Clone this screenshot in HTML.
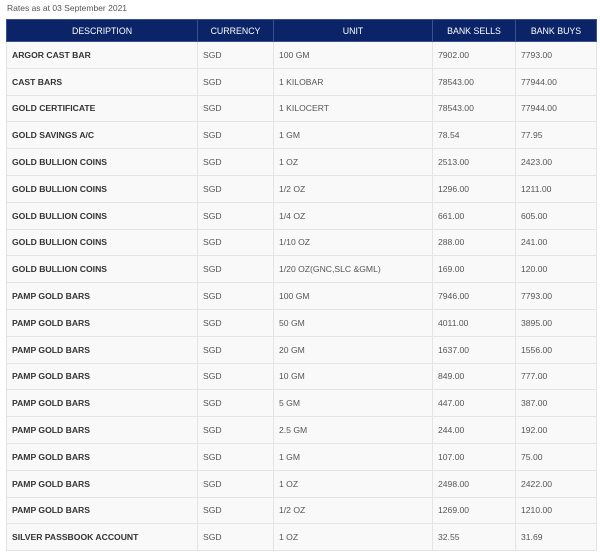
<!DOCTYPE html>
<html><head><meta charset="utf-8"><style>
body{margin:0;background:#fff;font-family:"Liberation Sans",sans-serif;}
.cap{position:absolute;left:7px;top:3px;font-size:8.5px;color:#555;}
table{position:absolute;left:6px;top:19px;width:590px;border-collapse:collapse;table-layout:fixed;font-size:8.6px;}
th{background:#0b2468;color:#fff;font-weight:normal;height:21px;border:1px solid #3a5090;padding:0;font-size:8.8px;}
td{height:25.8px;border:1px solid #e4e4e4;padding:0 0 0 5px;color:#555;background:#f9f9f9;}
td.b{font-weight:bold;color:#333;}
</style></head><body>
<div class="cap">Rates as at 03 September 2021</div>
<table>
<colgroup><col style="width:191px"><col style="width:76px"><col style="width:159px"><col style="width:83px"><col style="width:81px"></colgroup>
<tr><th>DESCRIPTION</th><th>CURRENCY</th><th>UNIT</th><th>BANK SELLS</th><th>BANK BUYS</th></tr>
<tr><td class="b">ARGOR CAST BAR</td><td>SGD</td><td>100 GM</td><td>7902.00</td><td>7793.00</td></tr>
<tr><td class="b">CAST BARS</td><td>SGD</td><td>1 KILOBAR</td><td>78543.00</td><td>77944.00</td></tr>
<tr><td class="b">GOLD CERTIFICATE</td><td>SGD</td><td>1 KILOCERT</td><td>78543.00</td><td>77944.00</td></tr>
<tr><td class="b">GOLD SAVINGS A/C</td><td>SGD</td><td>1 GM</td><td>78.54</td><td>77.95</td></tr>
<tr><td class="b">GOLD BULLION COINS</td><td>SGD</td><td>1 OZ</td><td>2513.00</td><td>2423.00</td></tr>
<tr><td class="b">GOLD BULLION COINS</td><td>SGD</td><td>1/2 OZ</td><td>1296.00</td><td>1211.00</td></tr>
<tr><td class="b">GOLD BULLION COINS</td><td>SGD</td><td>1/4 OZ</td><td>661.00</td><td>605.00</td></tr>
<tr><td class="b">GOLD BULLION COINS</td><td>SGD</td><td>1/10 OZ</td><td>288.00</td><td>241.00</td></tr>
<tr><td class="b">GOLD BULLION COINS</td><td>SGD</td><td>1/20 OZ(GNC,SLC &amp;GML)</td><td>169.00</td><td>120.00</td></tr>
<tr><td class="b">PAMP GOLD BARS</td><td>SGD</td><td>100 GM</td><td>7946.00</td><td>7793.00</td></tr>
<tr><td class="b">PAMP GOLD BARS</td><td>SGD</td><td>50 GM</td><td>4011.00</td><td>3895.00</td></tr>
<tr><td class="b">PAMP GOLD BARS</td><td>SGD</td><td>20 GM</td><td>1637.00</td><td>1556.00</td></tr>
<tr><td class="b">PAMP GOLD BARS</td><td>SGD</td><td>10 GM</td><td>849.00</td><td>777.00</td></tr>
<tr><td class="b">PAMP GOLD BARS</td><td>SGD</td><td>5 GM</td><td>447.00</td><td>387.00</td></tr>
<tr><td class="b">PAMP GOLD BARS</td><td>SGD</td><td>2.5 GM</td><td>244.00</td><td>192.00</td></tr>
<tr><td class="b">PAMP GOLD BARS</td><td>SGD</td><td>1 GM</td><td>107.00</td><td>75.00</td></tr>
<tr><td class="b">PAMP GOLD BARS</td><td>SGD</td><td>1 OZ</td><td>2498.00</td><td>2422.00</td></tr>
<tr><td class="b">PAMP GOLD BARS</td><td>SGD</td><td>1/2 OZ</td><td>1269.00</td><td>1210.00</td></tr>
<tr><td class="b">SILVER PASSBOOK ACCOUNT</td><td>SGD</td><td>1 OZ</td><td>32.55</td><td>31.69</td></tr>
</table>
</body></html>
